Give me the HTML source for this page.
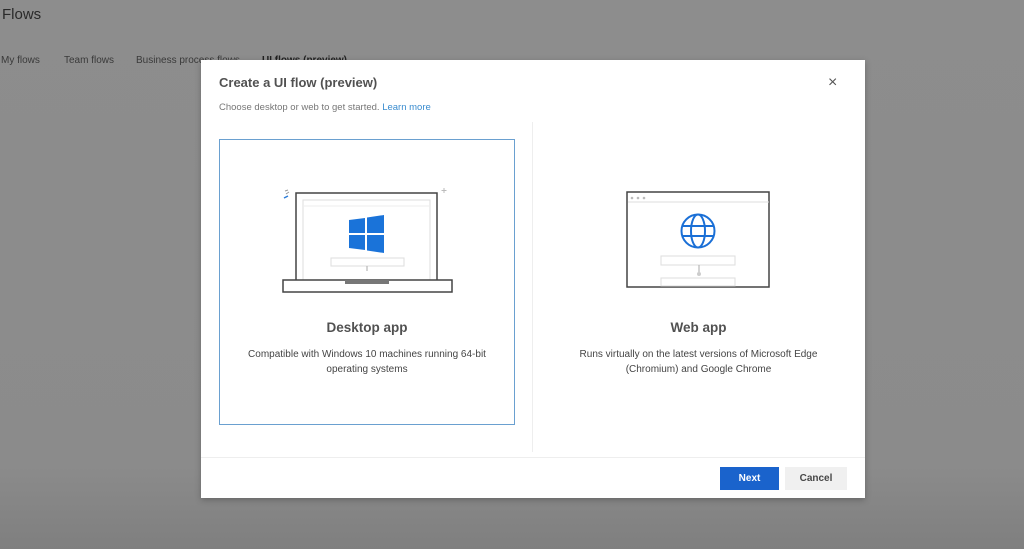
<!DOCTYPE html>
<html><head><meta charset="utf-8"><style>
*{margin:0;padding:0;box-sizing:border-box}
body{width:1024px;height:549px;overflow:hidden;background:linear-gradient(#8d8d8d,#8b8b8b 85%,#7f7f7f);font-family:"Liberation Sans",sans-serif;position:relative}
.t{position:absolute;color:#2a2a2a}
.dlg{position:absolute;left:201px;top:60px;width:664px;height:438px;background:#fff;box-shadow:0 2px 6px rgba(0,0,0,.25)}
.card{position:absolute;text-align:center}
.h{font-size:13.5px;color:#333;font-weight:bold;opacity:.85}
.p{font-size:10px;color:#444;line-height:15px}
</style></head><body>
<div class="t" style="left:2px;top:6px;font-size:15px">Flows</div>
<div class="t" style="left:1px;top:55px;font-size:10px;color:#3a3a3a">My flows</div>
<div class="t" style="left:64px;top:55px;font-size:10px;color:#3a3a3a">Team flows</div>
<div class="t" style="left:136px;top:55px;font-size:10px;color:#3a3a3a">Business process flows</div>
<div class="t" style="left:262px;top:55px;font-size:10px;color:#222;font-weight:bold">UI flows (preview)</div>
<div class="dlg">
 <div style="position:absolute;left:18px;top:15px;font-size:13px;color:#333;font-weight:bold;opacity:.85">Create a UI flow (preview)</div>
 <div style="position:absolute;left:18px;top:42px;font-size:9.5px;color:#777">Choose desktop or web to get started. <span style="color:#3a8ccf">Learn more</span></div>
 <div style="position:absolute;left:627px;top:14px;font-size:16px;color:#555">×</div>
 <div style="position:absolute;left:18px;top:79px;width:296px;height:286px;border:1px solid #6aa0d0"></div>
 <div style="position:absolute;left:331px;top:62px;width:1px;height:330px;background:#eee"></div>
 <svg style="position:absolute;left:70px;top:120px" width="200" height="120">
  <path d="M17 10l-3 1M15 14l3-2" stroke="#999" fill="none"/><path d="M17 16l-4 2" stroke="#2b7bd6" stroke-width="1.5"/>
  <path d="M173 8v5M170.5 10.5h5" stroke="#bbb"/>
  <rect x="25" y="13" width="141" height="98" fill="#fff" stroke="#444" stroke-width="1.5"/>
  <rect x="32" y="20" width="127" height="85" fill="none" stroke="#ddd"/>
  <line x1="32" y1="26" x2="159" y2="26" stroke="#eee"/>
  <path d="M78 40l16-2v15h-16z M96 37.5l17-2.5v18h-17z M78 55h16v15l-16-2z M96 55h17v18l-17-2.5z" fill="#1a73d9"/>
  <rect x="60" y="78" width="73" height="8" fill="none" stroke="#ddd"/><line x1="96" y1="86" x2="96" y2="91" stroke="#aaa"/>
  <rect x="12" y="100" width="169" height="12" fill="#fff" stroke="#444" stroke-width="1.5"/>
  <rect x="74" y="100" width="44" height="4" fill="#777"/>
 </svg>
 <svg style="position:absolute;left:425px;top:130px" width="148" height="100">
  <rect x="1" y="2" width="142" height="95" fill="#fff" stroke="#444" stroke-width="1.5"/>
  <circle cx="6" cy="8" r="1.3" fill="#bbb"/><circle cx="12" cy="8" r="1.3" fill="#bbb"/><circle cx="18" cy="8" r="1.3" fill="#bbb"/>
  <line x1="2" y1="12" x2="143" y2="12" stroke="#ddd"/>
  <g fill="none" stroke="#1a6fd6" stroke-width="2"><circle cx="72" cy="41" r="16.5"/><ellipse cx="72" cy="41" rx="7" ry="16.5"/><line x1="56" y1="36" x2="88" y2="36"/><line x1="56" y1="46" x2="88" y2="46"/></g>
  <rect x="35" y="66" width="74" height="9" fill="none" stroke="#ddd"/>
  <line x1="73" y1="75" x2="73" y2="82" stroke="#aaa"/><circle cx="73" cy="84" r="2" fill="#ccc"/>
  <rect x="35" y="88" width="74" height="8" fill="none" stroke="#ddd"/>
 </svg>
 <div class="card" style="left:19px;top:260px;width:294px"><div class="h">Desktop app</div><div class="p" style="margin-top:12px">Compatible with Windows 10 machines running 64-bit<br>operating systems</div></div>
 <div class="card" style="left:345px;top:260px;width:305px"><div class="h">Web app</div><div class="p" style="margin-top:12px">Runs virtually on the latest versions of Microsoft Edge<br>(Chromium) and Google Chrome</div></div>
 <div style="position:absolute;left:0;top:397px;width:664px;height:1px;background:#eee"></div>
 <div style="position:absolute;left:519px;top:407px;width:59px;height:23px;background:#1a63cc;color:#fff;font-size:10px;text-align:center;line-height:23px;font-weight:bold">Next</div>
 <div style="position:absolute;left:584px;top:407px;width:62px;height:23px;background:#efefef;color:#333;font-size:10px;text-align:center;line-height:23px;font-weight:bold;opacity:.9">Cancel</div>
</div>
</body></html>
